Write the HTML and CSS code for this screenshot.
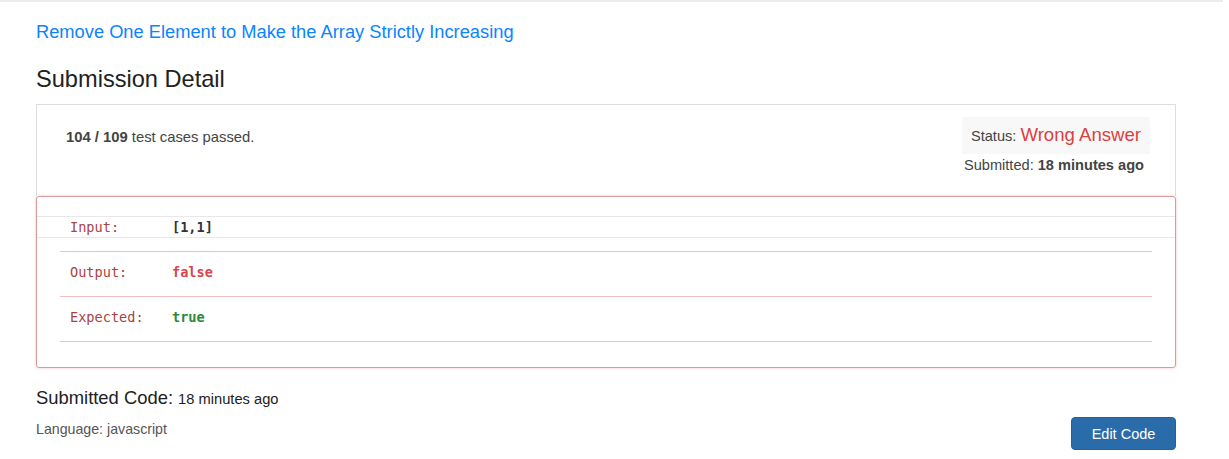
FILE: index.html
```html
<!DOCTYPE html>
<html>
<head>
<meta charset="utf-8">
<link rel="stylesheet" href="styles.css">
</head>
<body>
<div class="topline"></div>
<main class="page">
  <a class="problem-link" href="#">Remove One Element to Make the Array Strictly Increasing</a>
  <h3 class="page-title">Submission Detail</h3>
  <section class="summary">
    <div class="passed"><strong>104 / 109</strong> test cases passed.</div>
    <div class="status-col">
      <div class="status-box">Status: <span class="status-text">Wrong Answer</span></div>
      <div class="submitted">Submitted: <strong>18 minutes ago</strong></div>
    </div>
  </section>
  <section class="result">
    <div class="input-row">
      <span class="label">Input:</span><span class="val val-input">[1,1]</span>
    </div>
    <div class="cmp">
      <div class="cmp-row">
        <span class="label">Output:</span><span class="val val-bad">false</span>
      </div>
      <div class="cmp-row">
        <span class="label">Expected:</span><span class="val val-good">true</span>
      </div>
    </div>
  </section>
  <section class="code-head">
    <div class="code-info">
      <h4 class="code-title">Submitted Code: <span class="code-time">18 minutes ago</span></h4>
      <div class="lang">Language: javascript</div>
    </div>
    <button class="edit-btn">Edit Code</button>
  </section>
</main>
</body>
</html>
```

FILE: styles.css
```css
html, body {
  margin: 0;
  padding: 0;
  background: #fff;
}
body {
  font-family: "Liberation Sans", Arial, Helvetica, sans-serif;
  color: #333;
}
.topline {
  height: 2px;
  background: #ebebeb;
  margin-right: 6px;
}
.page {
  width: 1140px;
  margin-left: 36px;
  display: flex;
  flex-direction: column;
}
.problem-link {
  margin-top: 18px;
  font-size: 18.3px;
  line-height: 24px;
  color: #0a84ff;
  text-decoration: none;
  align-self: flex-start;
}
.page-title {
  margin: 20px 0 0 0;
  font-size: 23.6px;
  font-weight: normal;
  line-height: 30px;
  color: #212121;
}
.summary {
  margin-top: 10px;
  border: 1px solid #ddd;
  border-bottom: none;
  height: 92px;
  box-sizing: border-box;
  display: flex;
  justify-content: space-between;
  align-items: flex-start;
  padding: 12px 25px 0 29px;
}
.passed {
  margin-top: 10px;
  font-size: 14.8px;
  line-height: 20px;
  color: #444;
}
.status-col {
  display: flex;
  flex-direction: column;
  align-items: flex-end;
}
.status-box {
  background: #f8f8f8;
  padding: 7px 9px 7px 9px;
  font-size: 14.6px;
  line-height: 22px;
  color: #444;
}
.status-text {
  color: #dc3f3f;
  font-size: 18.6px;
}
.submitted {
  margin-top: 0;
  margin-right: 6px;
  font-size: 14.6px;
  line-height: 22px;
  color: #444;
}
.result {
  border: 1px solid #d89a9a;
  border-radius: 3px;
  box-shadow: 0 0 3px rgba(217, 83, 79, 0.35);
  padding: 19px 0 25px 0;
  display: flex;
  flex-direction: column;
}
.label {
  display: inline-block;
  width: 102px;
  color: #a94442;
}
.val { font-weight: bold; }
.input-row {
  border-top: 1px solid #e8e8e8;
  border-bottom: 1px solid #e8e8e8;
  height: 20px;
  line-height: 20px;
  padding-left: 33px;
  font-family: "DejaVu Sans Mono", "Liberation Mono", monospace;
  font-size: 13.6px;
}
.val-input { color: #333; }
.cmp {
  margin: 13px 23px 0 23px;
  border-top: 1px solid #f0c0c0;
  font-family: "DejaVu Sans Mono", "Liberation Mono", monospace;
  font-size: 13.6px;
}
.cmp-row {
  height: 44px;
  line-height: 40px;
  box-sizing: content-box;
  padding-bottom: 0;
  border-bottom: 1px solid #f0c0c0;
  padding-left: 10px;
}
.val-bad { color: #d9454a; }
.val-good { color: #2a8a3a; }
.code-head {
  display: flex;
  justify-content: space-between;
  align-items: flex-start;
  margin-top: 19px;
}
.code-title {
  margin: 0;
  font-size: 18.4px;
  font-weight: normal;
  line-height: 22px;
  color: #212121;
}
.code-time {
  font-size: 14.7px;
  color: #222;
}
.lang {
  margin-top: 10px;
  font-size: 14.2px;
  line-height: 18px;
  color: #555;
}
.edit-btn {
  margin-top: 30px;
  width: 105px;
  height: 33px;
  border: 1px solid #24619a;
  border-radius: 4px;
  background: #2a6ca9;
  color: #fff;
  font-family: "Liberation Sans", Arial, sans-serif;
  font-size: 14.5px;
}
```
